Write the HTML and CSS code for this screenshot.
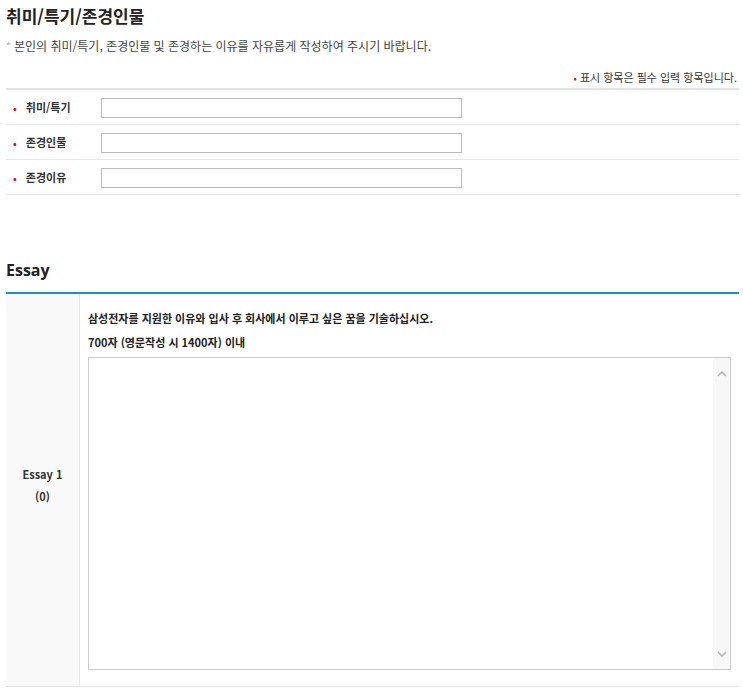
FILE: index.html
```html
<!DOCTYPE html>
<html lang="ko">
<head>
  <meta charset="UTF-8">
  <meta name="viewport" content="width=device-width, initial-scale=1.0">
  <title>취미/특기/존경인물 - Essay</title>
  <link rel="stylesheet" href="styles.css">
</head>
<body>
  <div class="wrap">
    <section class="hobby">
      <h2 class="title">취미/특기/존경인물</h2>
      <p class="desc"><span class="star">*</span> 본인의 취미/특기, 존경인물 및 존경하는 이유를 자유롭게 작성하여 주시기 바랍니다.</p>
      <p class="note"><span class="dot">•</span> 표시 항목은 필수 입력 항목입니다.</p>

      <div class="form-table">
        <div class="row">
          <label class="label" for="hobby"><span class="dot">•</span>취미/특기</label>
          <input type="text" id="hobby" class="field">
        </div>
        <div class="row">
          <label class="label" for="person"><span class="dot">•</span>존경인물</label>
          <input type="text" id="person" class="field">
        </div>
        <div class="row">
          <label class="label" for="reason"><span class="dot">•</span>존경이유</label>
          <input type="text" id="reason" class="field">
        </div>
      </div>
    </section>

    <section class="essay">
      <h2 class="title essay-title">Essay</h2>
      <div class="essay-table">
        <div class="essay-head">
          <p>Essay 1</p>
          <p>(0)</p>
        </div>
        <div class="essay-body">
          <p class="question">삼성전자를 지원한 이유와 입사 후 회사에서 이루고 싶은 꿈을 기술하십시오.</p>
          <p class="limit">700자 (영문작성 시 1400자) 이내</p>
          <div class="answer-box">
            <textarea class="answer"></textarea>
            <!-- 스크롤바 표시 -->
            <div class="scroll">
              <svg width="10" height="6" viewBox="0 0 10 6"><path d="M1 5 L5 1 L9 5" fill="none" stroke="#b5b5b5" stroke-width="1.6"/></svg>
              <svg width="10" height="6" viewBox="0 0 10 6"><path d="M1 1 L5 5 L9 1" fill="none" stroke="#b5b5b5" stroke-width="1.6"/></svg>
            </div>
          </div>
        </div>
      </div>
    </section>
  </div>
</body>
</html>
```

FILE: styles.css
```css
body {
  font-family: "Noto Sans CJK KR", "Noto Sans", sans-serif;
  margin: 0;
  padding: 0;
  background-color: white;
  color: #222;
}

.wrap {
  padding: 0 4px 0 6px;
}

p {
  margin: 0;
}

.title {
  margin: 0;
  padding-top: 4px;
  font-size: 17px;
  line-height: 24px;
  font-weight: bold;
  color: #222;
}

.desc {
  margin-top: 10px;
  font-size: 12px;
  line-height: 16px;
  color: #444;
}

.desc .star {
  color: #aaa;
  font-size: 10px;
  vertical-align: top;
}

.dot {
  color: #e60012;
  font-size: 10px;
}

.note {
  margin-top: 15px;
  text-align: right;
  padding-right: 2px;
  font-size: 11px;
  line-height: 16px;
  color: #333;
}

.form-table {
  margin-top: 2px;
  border-top: 2px solid #e3e3e3;
}

.form-table .row {
  display: flex;
  align-items: center;
  height: 34px;
  border-bottom: 1px solid #e6e6e6;
}

.form-table .label {
  width: 95px;
  padding-left: 7px;
  box-sizing: border-box;
  font-size: 11px;
  font-weight: bold;
  color: #333;
}

.form-table .label .dot {
  margin-right: 9px;
}

.form-table .field {
  width: 361px;
  height: 20px;
  box-sizing: border-box;
  border: 1px solid #bbb;
  padding: 0 4px;
  margin-top: 1px;
}

.essay {
  margin-top: 60px;
}

.essay-title {
  font-family: "Open Sans", "Noto Sans", sans-serif;
  font-size: 16px;
  padding-top: 3px;
}

.essay-table {
  margin-top: 10px;
  display: flex;
  border-top: 2px solid #1a8fd8;
  border-bottom: 1px solid #e3e3e3;
}

.essay-head {
  width: 74px;
  background-color: #f9f9f9;
  border-right: 1px solid #e3e3e3;
  display: flex;
  flex-direction: column;
  justify-content: center;
  align-items: center;
  gap: 6px;
  padding-bottom: 10px;
  font-size: 11px;
  font-weight: bold;
  color: #333;
}

.essay-body {
  flex: 1;
  padding: 16px 8px 16px 8px;
}

.essay-body .question,
.essay-body .limit {
  font-size: 11px;
  line-height: 16px;
  font-weight: bold;
  color: #222;
}

.essay-body .limit {
  margin-top: 8px;
}

.answer-box {
  position: relative;
  margin-top: 7px;
  width: 643px;
  height: 313px;
}

.answer {
  display: block;
  width: 100%;
  height: 100%;
  box-sizing: border-box;
  border: 1px solid #ccc;
  resize: none;
  padding: 2px 20px 2px 4px;
}

.scroll {
  position: absolute;
  top: 1px;
  right: 1px;
  bottom: 1px;
  width: 17px;
  background-color: #f7f7f7;
  display: flex;
  flex-direction: column;
  justify-content: space-between;
  align-items: center;
  padding: 13px 0 12px;
  box-sizing: border-box;
}

.scroll svg {
  display: block;
}
```
